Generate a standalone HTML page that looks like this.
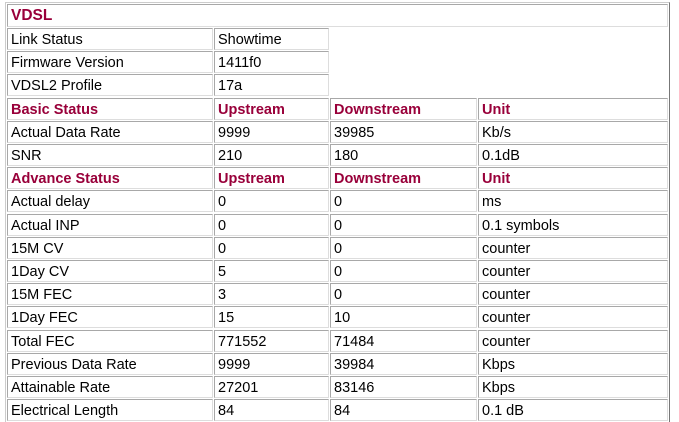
<!DOCTYPE html>
<html><head><meta charset="utf-8"><style>
html,body{margin:0;padding:0;background:#fff;width:679px;height:422px;overflow:hidden;position:relative;font-family:"Liberation Sans",sans-serif;}
.o{position:absolute;left:5px;top:2px;width:663px;height:440px;border-top:1px solid #ccc;border-left:1px solid #ccc;border-right:1px solid #777;}
.c{position:absolute;border:1px solid #a8a8a8;border-right-color:#ddd;border-bottom-color:#ddd;box-sizing:border-box;height:22px;font-size:14.5px;line-height:22px;padding-left:3px;color:#000;white-space:nowrap;}
.h{color:#99003a;font-weight:bold;font-size:14.5px;}
.a{left:7px;width:206px}.b{left:214px;width:115px}.d{left:330px;width:147px}.e{left:478px;width:190px}
</style></head><body>
<div class="o"></div>
<div class="c h" style="left:7px;width:661px;top:4px;height:23px;font-size:15.5px;">VDSL</div>

<div class="c a" style="top:28px">Link Status</div><div class="c b" style="top:28px">Showtime</div>
<div class="c a" style="top:51.2px">Firmware Version</div><div class="c b" style="top:51.2px">1411f0</div>
<div class="c a" style="top:74.4px">VDSL2 Profile</div><div class="c b" style="top:74.4px">17a</div>

<div class="c a h" style="top:97.6px">Basic Status</div><div class="c b h" style="top:97.6px">Upstream</div><div class="c d h" style="top:97.6px">Downstream</div><div class="c e h" style="top:97.6px">Unit</div>
<div class="c a" style="top:120.8px">Actual Data Rate</div><div class="c b" style="top:120.8px">9999</div><div class="c d" style="top:120.8px">39985</div><div class="c e" style="top:120.8px">Kb/s</div>
<div class="c a" style="top:144px">SNR</div><div class="c b" style="top:144px">210</div><div class="c d" style="top:144px">180</div><div class="c e" style="top:144px">0.1dB</div>

<div class="c a h" style="top:167.1px">Advance Status</div><div class="c b h" style="top:167.1px">Upstream</div><div class="c d h" style="top:167.1px">Downstream</div><div class="c e h" style="top:167.1px">Unit</div>
<div class="c a" style="top:190.3px">Actual delay</div><div class="c b" style="top:190.3px">0</div><div class="c d" style="top:190.3px">0</div><div class="c e" style="top:190.3px">ms</div>
<div class="c a" style="top:213.5px">Actual INP</div><div class="c b" style="top:213.5px">0</div><div class="c d" style="top:213.5px">0</div><div class="c e" style="top:213.5px">0.1 symbols</div>
<div class="c a" style="top:236.7px">15M CV</div><div class="c b" style="top:236.7px">0</div><div class="c d" style="top:236.7px">0</div><div class="c e" style="top:236.7px">counter</div>
<div class="c a" style="top:259.9px">1Day CV</div><div class="c b" style="top:259.9px">5</div><div class="c d" style="top:259.9px">0</div><div class="c e" style="top:259.9px">counter</div>
<div class="c a" style="top:283.1px">15M FEC</div><div class="c b" style="top:283.1px">3</div><div class="c d" style="top:283.1px">0</div><div class="c e" style="top:283.1px">counter</div>
<div class="c a" style="top:306.3px">1Day FEC</div><div class="c b" style="top:306.3px">15</div><div class="c d" style="top:306.3px">10</div><div class="c e" style="top:306.3px">counter</div>
<div class="c a" style="top:329.5px">Total FEC</div><div class="c b" style="top:329.5px">771552</div><div class="c d" style="top:329.5px">71484</div><div class="c e" style="top:329.5px">counter</div>
<div class="c a" style="top:352.7px">Previous Data Rate</div><div class="c b" style="top:352.7px">9999</div><div class="c d" style="top:352.7px">39984</div><div class="c e" style="top:352.7px">Kbps</div>
<div class="c a" style="top:375.9px">Attainable Rate</div><div class="c b" style="top:375.9px">27201</div><div class="c d" style="top:375.9px">83146</div><div class="c e" style="top:375.9px">Kbps</div>
<div class="c a" style="top:399.1px">Electrical Length</div><div class="c b" style="top:399.1px">84</div><div class="c d" style="top:399.1px">84</div><div class="c e" style="top:399.1px">0.1 dB</div>
</body></html>
